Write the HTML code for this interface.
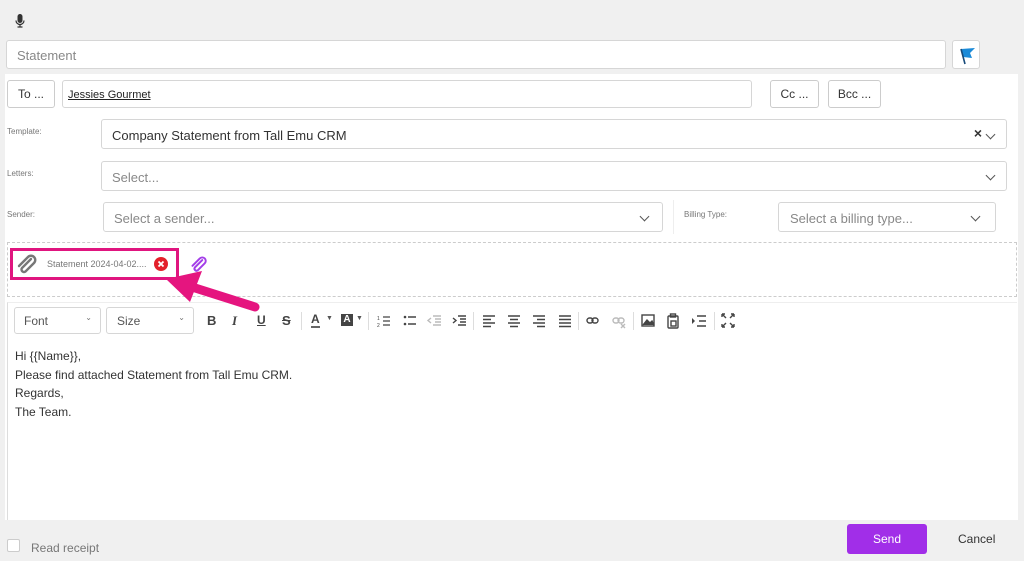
<!DOCTYPE html>
<html><head><style>
*{box-sizing:border-box;margin:0;padding:0}
body{width:1024px;height:561px;background:#f0f0f0;font-family:"Liberation Sans",sans-serif;position:relative;overflow:hidden;color:#333}
.a{position:absolute}
.box{position:absolute;background:#fff;border:1px solid #d6d6d6;border-radius:3px}
.lbl{position:absolute;font-size:8px;color:#777}
.ph{font-size:13px;color:#888}
.chev{position:absolute;width:7px;height:7px;border-right:1.3px solid #555;border-bottom:1.3px solid #555;transform:rotate(45deg)}
.btn{position:absolute;background:#fff;border:1px solid #ccc;border-radius:3px;font-size:12px;text-align:center;color:#333}
.ic{position:absolute;top:313px}
</style></head><body>
<!-- mic -->
<svg class="a" style="left:15px;top:14px" width="10" height="14" viewBox="0 0 10 14"><rect x="2.5" y="0" width="5" height="9" rx="2.5" fill="#333"/><path d="M1 6.5a4 4 0 0 0 8 0M5 10.5v2.5M2.5 13h5" stroke="#333" stroke-width="1.2" fill="none"/></svg>
<div class="box" style="left:6px;top:40px;width:940px;height:29px"><span class="ph a" style="left:10px;top:7px;color:#888">Statement</span></div>
<div class="box" style="left:952px;top:40px;width:28px;height:29px"><svg class="a" style="left:6px;top:5px" width="17" height="19" viewBox="0 0 17 19"><path d="M2 3l14-1-5 5 2 5-9-1z" fill="#1a8ad8"/><path d="M2 3l4 15" stroke="#174a7a" stroke-width="1.6"/></svg></div>
<!-- white panel -->
<div class="a" style="left:5px;top:74px;width:1013px;height:446px;background:#fff"></div>
<div class="btn" style="left:7px;top:80px;width:48px;height:28px;line-height:26px">To ...</div>
<div class="box" style="left:62px;top:80px;width:690px;height:28px"><span class="a" style="left:5px;top:8px;font-size:11px;color:#222;text-decoration:underline">Jessies Gourmet</span></div>
<div class="btn" style="left:770px;top:80px;width:49px;height:28px;line-height:26px">Cc ...</div>
<div class="btn" style="left:828px;top:80px;width:53px;height:28px;line-height:26px">Bcc ...</div>
<div class="lbl" style="left:7px;top:127px">Template:</div>
<div class="box" style="left:101px;top:119px;width:906px;height:30px"><span class="a" style="left:10px;top:8px;font-size:13px;color:#333">Company Statement from Tall Emu CRM</span><span class="a" style="right:24px;top:5px;font-size:14px;font-weight:bold;color:#333">×</span><div class="chev" style="right:12px;top:11px"></div></div>
<div class="lbl" style="left:7px;top:169px">Letters:</div>
<div class="box" style="left:101px;top:161px;width:906px;height:30px"><span class="ph a" style="left:10px;top:8px">Select...</span><div class="chev" style="right:12px;top:10px"></div></div>
<div class="lbl" style="left:7px;top:210px">Sender:</div>
<div class="box" style="left:103px;top:202px;width:560px;height:30px"><span class="ph a" style="left:10px;top:8px">Select a sender...</span><div class="chev" style="right:14px;top:10px"></div></div>
<div class="a" style="left:673px;top:200px;width:1px;height:34px;background:#eee"></div>
<div class="lbl" style="left:684px;top:210px">Billing Type:</div>
<div class="box" style="left:778px;top:202px;width:218px;height:30px"><span class="ph a" style="left:11px;top:8px">Select a billing type...</span><div class="chev" style="right:16px;top:10px"></div></div>
<!-- attachments -->
<div class="a" style="left:7px;top:242px;width:1010px;height:55px;border:1px dashed #ccc"></div>
<div class="a" style="left:10px;top:248px;width:169px;height:32px;border:3px solid #e0157f"></div>
<svg class="a" style="left:16px;top:254px" width="22" height="22" viewBox="0 0 22 22"><path d="M15 5 6 14a2.5 2.5 0 0 0 3.5 3.5L18 9a4 4 0 0 0-6-6L3 12" stroke="#777" stroke-width="2.4" fill="none" stroke-linecap="round"/></svg>
<span class="a" style="left:47px;top:259px;font-size:9px;color:#777">Statement 2024-04-02....</span>
<svg class="a" style="left:154px;top:257px" width="14" height="14"><circle cx="7" cy="7" r="7" fill="#e3202a"/><path d="M4.5 4.5l5 5M9.5 4.5l-5 5" stroke="#fff" stroke-width="1.8"/></svg>
<svg class="a" style="left:190px;top:256px" width="18" height="18" viewBox="0 0 22 22"><path d="M15 5 6 14a2.5 2.5 0 0 0 3.5 3.5L18 9a4 4 0 0 0-6-6L3 12" stroke="#a33ee8" stroke-width="2.4" fill="none" stroke-linecap="round"/></svg>
<!-- editor -->
<div class="a" style="left:7px;top:302px;width:1010px;height:218px;border-left:1px solid #ddd;border-top:1px solid #eee"></div>
<div class="box" style="left:14px;top:307px;width:87px;height:27px"><span class="a" style="left:9px;top:6px;font-size:12px;color:#555">Font</span><span class="a" style="right:8px;top:5px;font-size:8px;color:#777">⌄</span></div>
<div class="box" style="left:106px;top:307px;width:88px;height:27px"><span class="a" style="left:10px;top:6px;font-size:12px;color:#555">Size</span><span class="a" style="right:8px;top:5px;font-size:8px;color:#777">⌄</span></div>
<span class="a" style="left:207px;top:313px;font-size:13px;font-weight:bold;color:#444">B</span>
<span class="a" style="left:232px;top:313px;font-size:13px;font-style:italic;font-weight:bold;font-family:'Liberation Serif';color:#444">I</span>
<span class="a" style="left:257px;top:313px;font-size:12px;font-weight:bold;text-decoration:underline;color:#444">U</span>
<span class="a" style="left:282px;top:313px;font-size:13px;font-weight:bold;text-decoration:line-through;color:#444">S</span>
<div class="a" style="left:301px;top:312px;width:1px;height:18px;background:#ddd"></div>
<span class="a" style="left:311px;top:313px;font-size:12px;font-weight:bold;color:#444;border-bottom:2px solid #666;line-height:13px">A</span><span class="a" style="left:326px;top:315px;font-size:7px;color:#555">▼</span>
<span class="a" style="left:341px;top:314px;width:12px;height:12px;background:#444;color:#fff;font-size:10px;font-weight:bold;text-align:center;line-height:12px">A</span><span class="a" style="left:356px;top:315px;font-size:7px;color:#555">▼</span>
<div class="a" style="left:368px;top:312px;width:1px;height:18px;background:#ddd"></div>
<svg class="a" style="left:376px;top:313px" width="360" height="16" viewBox="0 0 360 16" fill="none" stroke="#444" stroke-width="1.4">
<g stroke-width="1.2"><path d="M7 4h7M7 8h7M7 12h7"/><text x="1" y="7" font-size="5" fill="#444" stroke="none">1</text><text x="1" y="14" font-size="5" fill="#444" stroke="none">2</text></g>
<g transform="translate(26)"><circle cx="3" cy="4" r="1.3" fill="#444" stroke="none"/><circle cx="3" cy="11" r="1.3" fill="#444" stroke="none"/><path d="M6 4h8M6 11h8"/></g>
<g transform="translate(51)" stroke="#bbb"><path d="M6 3h8M8 6h6M8 9h6M6 12h8M4 5l-3 2.5L4 10"/></g>
<g transform="translate(76)"><path d="M6 3h8M8 6h6M8 9h6M6 12h8M1 5l3 2.5L1 10"/></g>
<g transform="translate(106)" stroke-width="1.6"><path d="M1 3h12M1 6.5h8M1 10h12M1 13.5h8"/></g>
<g transform="translate(131)" stroke-width="1.6"><path d="M1 3h12M3 6.5h8M1 10h12M3 13.5h8"/></g>
<g transform="translate(156)" stroke-width="1.6"><path d="M1 3h12M5 6.5h8M1 10h12M5 13.5h8"/></g>
<g transform="translate(182)" stroke-width="1.6"><path d="M1 3h12M1 6.5h12M1 10h12M1 13.5h12"/></g>
<g transform="translate(210)"><rect x="1" y="5" width="6" height="5" rx="2.5"/><rect x="6" y="5" width="6" height="5" rx="2.5"/></g>
<g transform="translate(236)" stroke="#bbb"><rect x="1" y="5" width="6" height="5" rx="2.5"/><rect x="6" y="5" width="6" height="5" rx="2.5"/><path d="M9 11l4 4M13 11l-4 4"/></g>
<g transform="translate(265)"><rect x="1" y="2" width="12" height="11"/><path d="M2 12l4-5 3 3 2-2 2 4" fill="#444"/></g>
<g transform="translate(290)"><rect x="2" y="3" width="10" height="12" rx="1"/><rect x="4.5" y="1" width="5" height="3"/><rect x="5" y="8" width="5" height="5"/></g>
<g transform="translate(315)" stroke-width="1.6"><path d="M6 3h9M8 8h7M6 13h9"/><path d="M1 5l3 3-3 3z" fill="#444" stroke="none"/></g>
<g transform="translate(345)"><path d="M1 1l4 4M1 1h3M1 1v3M13 1l-4 4M13 1h-3M13 1v3M1 14l4-4M1 14h3M1 14v-3M13 14l-4-4M13 14h-3M13 14v-3"/></g>
</svg>
<div class="a" style="left:473px;top:312px;width:1px;height:18px;background:#ddd"></div>
<div class="a" style="left:578px;top:312px;width:1px;height:18px;background:#ddd"></div>
<div class="a" style="left:633px;top:312px;width:1px;height:18px;background:#ddd"></div>
<div class="a" style="left:714px;top:312px;width:1px;height:18px;background:#ddd"></div>
<div class="a" style="left:15px;top:347px;font-size:12px;line-height:18.5px;color:#333">Hi {{Name}},<br>Please find attached Statement from Tall Emu CRM.<br>Regards,<br>The Team.</div>
<!-- arrow -->
<svg class="a" style="left:0;top:0" width="300" height="330"><path d="M255 307 192 287" stroke="#e5157f" stroke-width="9" stroke-linecap="round"/><path d="M166 279 202 271 190 302z" fill="#e5157f"/></svg>
<!-- footer -->
<div class="a" style="left:7px;top:539px;width:13px;height:13px;background:#fff;border:1px solid #ccc;border-radius:2px"></div>
<span class="a" style="left:31px;top:541px;font-size:12px;color:#777">Read receipt</span>
<div class="a" style="left:847px;top:524px;width:80px;height:30px;background:#a12ee8;border-radius:3px;color:#fff;font-size:12px;text-align:center;line-height:30px">Send</div>
<span class="a" style="left:958px;top:532px;font-size:12px;color:#333">Cancel</span>
</body></html>
